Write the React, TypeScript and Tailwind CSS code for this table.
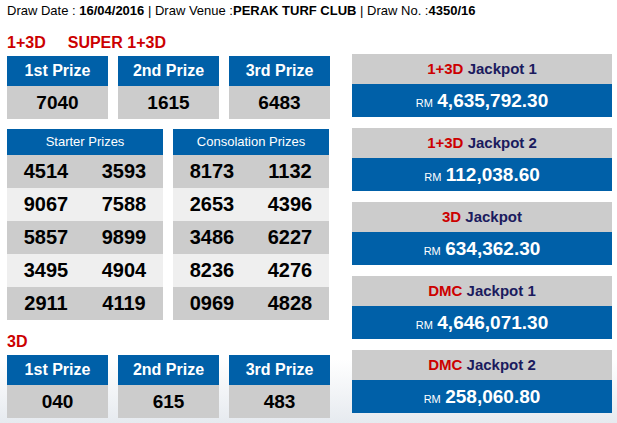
const topPrizes = [
  { label: '1st Prize', value: '7040' },
  { label: '2nd Prize', value: '1615' },
  { label: '3rd Prize', value: '6483' },
];

const threeD = [
  { label: '1st Prize', value: '040' },
  { label: '2nd Prize', value: '615' },
  { label: '3rd Prize', value: '483' },
];

const starter = [
  ['4514', '3593'],
  ['9067', '7588'],
  ['5857', '9899'],
  ['3495', '4904'],
  ['2911', '4119'],
];

const consolation = [
  ['8173', '1132'],
  ['2653', '4396'],
  ['3486', '6227'],
  ['8236', '4276'],
  ['0969', '4828'],
];

const jackpots = [
  { game: '1+3D', name: 'Jackpot 1', amount: '4,635,792.30' },
  { game: '1+3D', name: 'Jackpot 2', amount: '112,038.60' },
  { game: '3D', name: 'Jackpot', amount: '634,362.30' },
  { game: 'DMC', name: 'Jackpot 1', amount: '4,646,071.30' },
  { game: 'DMC', name: 'Jackpot 2', amount: '258,060.80' },
];

function PrizeRow({ items }: { items: { label: string; value: string }[] }) {
  return (
    <div className="flex gap-[10px]">
      {items.map((p) => (
        <div key={p.label} className="w-[101px]">
          <div className="h-[30px] bg-[#0060a8] text-white text-[16px] font-bold leading-[30px] text-center">
            {p.label}
          </div>
          <div className="h-[33px] bg-[#cccccc] text-black text-[19px] font-bold leading-[33px] text-center">
            {p.value}
          </div>
        </div>
      ))}
    </div>
  );
}

function NumberTable({ title, rows }: { title: string; rows: string[][] }) {
  return (
    <div className="w-[156px]">
      <div className="h-[26px] bg-[#0060a8] text-white text-[13px] leading-[26px] text-center">
        {title}
      </div>
      {rows.map((r, i) => (
        <div
          key={i}
          className={`grid grid-cols-2 h-[33px] text-[20px] font-bold leading-[33px] text-black text-center ${
            i % 2 === 0 ? 'bg-[#cccccc]' : 'bg-[#efefef]'
          }`}
        >
          <span>{r[0]}</span>
          <span>{r[1]}</span>
        </div>
      ))}
    </div>
  );
}

export default function App() {
  return (
    <div className="w-[617px] h-[423px] overflow-hidden bg-[linear-gradient(to_bottom,#ffffff_85%,#e6eaef_100%)] font-['Liberation_Sans',Arial,sans-serif]">
      <div className="h-[30px] pl-[7px] pt-[1px] text-[13px] leading-[20px] text-black">
        Draw Date : <b>16/04/2016</b> | Draw Venue :<b>PERAK TURF CLUB</b> | Draw No. :<b>4350/16</b>
      </div>

      <div className="flex pl-[7px] gap-[22px]">
        <div className="w-[323px]">
          <div className="h-[26px] text-[16px] font-bold leading-[26px] text-[#cc0000]">
            <span>1+3D</span>
            <span className="ml-[22px]">SUPER 1+3D</span>
          </div>
          <PrizeRow items={topPrizes} />

          <div className="flex gap-[10px] mt-[10px]">
            <NumberTable title="Starter Prizes" rows={starter} />
            <NumberTable title="Consolation Prizes" rows={consolation} />
          </div>

          <div className="h-[35px] pt-[9px] text-[16px] font-bold leading-[26px] text-[#cc0000]">3D</div>
          <PrizeRow items={threeD} />
        </div>

        <div className="w-[260px] pt-[24px] flex flex-col gap-[11px]">
          {jackpots.map((j) => (
            <div key={j.game + j.name}>
              <div className="h-[30px] bg-[#cccccc] text-[15px] font-bold leading-[30px] text-center">
                <span className="text-[#cc0000]">{j.game}</span>{' '}
                <span className="text-[#1b1b5e]">{j.name}</span>
              </div>
              <div className="h-[33px] bg-[#0060a8] text-white leading-[33px] text-center">
                <span className="text-[11px]">RM</span>{' '}
                <span className="text-[19px] font-bold">{j.amount}</span>
              </div>
            </div>
          ))}
        </div>
      </div>
    </div>
  );
}
